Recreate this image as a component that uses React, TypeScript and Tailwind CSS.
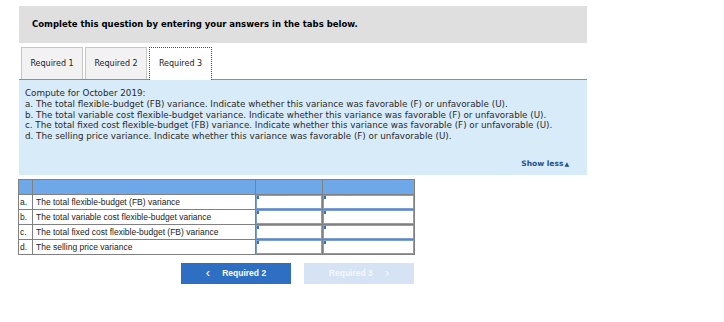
const rows = [
  { key: 'a.', label: 'The total flexible-budget (FB) variance' },
  { key: 'b.', label: 'The total variable cost flexible-budget variance' },
  { key: 'c.', label: 'The total fixed cost flexible-budget (FB) variance' },
  { key: 'd.', label: 'The selling price variance' },
];

const verdana = "font-['DejaVu_Sans',Verdana,sans-serif]";
const arial = "font-['Liberation_Sans',Arial,sans-serif]";

function InputCell() {
  return (
    <td className="border border-[#808080] p-0">
      <div className="relative h-[14px] border border-[#7b9fd6] bg-white">
        <span className="absolute left-0 top-0 w-[2px] h-[3px] bg-[#2f6fd0]" />
      </div>
    </td>
  );
}

export default function App() {
  return (
    <div className="w-[724px] h-[322px] bg-white pl-[19px] pt-[6px]">
      <div className="w-[568px]">
        {/* Instruction header */}
        <div className={`h-[37px] bg-[#dfdfdf] flex items-center pl-[13px] text-[8.5px] font-bold text-black ${verdana}`}>
          Complete this question by entering your answers in the tabs below.
        </div>

        {/* Tabs */}
        <div className={`mt-[4px] flex gap-[2px] pl-[2px] text-[8px] text-[#222] ${verdana}`}>
          <div className="w-[62px] h-[32px] pt-[1px] flex items-center justify-center bg-[#f2f2f2] border border-b-0 border-[#c6c6c6]">
            Required 1
          </div>
          <div className="w-[62px] h-[32px] pt-[1px] flex items-center justify-center bg-[#f2f2f2] border border-b-0 border-[#c6c6c6]">
            Required 2
          </div>
          <div className="relative z-10 w-[63px] h-[33px] -mb-[1px] flex items-center justify-center bg-white border border-b-0 border-dotted border-[#2a4d8c]">
            Required 3
          </div>
        </div>

        {/* Question panel */}
        <div className={`border-t border-[#8f8f8f] bg-[#d7ebf9] h-[96px] pl-[6px] pr-[18px] pt-[8px] text-[8.75px] leading-[10.75px] text-[#2a2a2a] flex flex-col ${verdana}`}>
          <p>Compute for October 2019:</p>
          <p>a. The total flexible-budget (FB) variance. Indicate whether this variance was favorable (F) or unfavorable (U).</p>
          <p>b. The total variable cost flexible-budget variance. Indicate whether this variance was favorable (F) or unfavorable (U).</p>
          <p>c. The total fixed cost flexible-budget (FB) variance. Indicate whether this variance was favorable (F) or unfavorable (U).</p>
          <p>d. The selling price variance. Indicate whether this variance was favorable (F) or unfavorable (U).</p>
          <div className="mt-auto mb-[5px] self-end text-[7.5px] font-bold text-[#1f4e8a]">
            Show less<span className="text-[6px] ml-[1px]">▲</span>
          </div>
        </div>
      </div>

      {/* Answer table */}
      <table className={`mt-[4px] -ml-[1px] border-collapse w-[397px] table-fixed text-[8.5px] text-[#222] ${arial}`}>
        <colgroup>
          <col className="w-[14px]" />
          <col className="w-[223px]" />
          <col className="w-[67px]" />
          <col className="w-[92px]" />
        </colgroup>
        <thead>
          <tr className="bg-[#6fa8e8]">
            <th className="border border-[#808080] h-[15px] p-0" />
            <th className="border border-[#808080] p-0" />
            <th className="border border-[#808080] p-0" />
            <th className="border border-[#808080] p-0" />
          </tr>
        </thead>
        <tbody>
          {rows.map((r) => (
            <tr key={r.key}>
              <td className="border border-[#808080] px-[1px] py-0 leading-[14px]">{r.key}</td>
              <td className="border border-[#808080] px-[3px] py-0 leading-[14px] whitespace-nowrap">{r.label}</td>
              <InputCell />
              <InputCell />
            </tr>
          ))}
        </tbody>
      </table>

      {/* Navigation buttons */}
      <div className={`mt-[8px] w-[396px] -ml-[1px] flex justify-end gap-[13px] text-[8.5px] font-bold text-white ${arial}`}>
        <button className="w-[110px] h-[21px] bg-[#2e6ec3] flex items-center justify-center gap-[12px]">
          <span className="font-normal text-[13px] leading-none -mt-[2px]">&lsaquo;</span>
          <span>Required 2</span>
        </button>
        <button className="w-[110px] h-[21px] bg-[#d5e3f4] text-[#f4f8fd] flex items-center justify-center gap-[12px]">
          <span>Required 3</span>
          <span className="font-normal text-[13px] leading-none -mt-[2px]">&rsaquo;</span>
        </button>
      </div>
    </div>
  );
}
